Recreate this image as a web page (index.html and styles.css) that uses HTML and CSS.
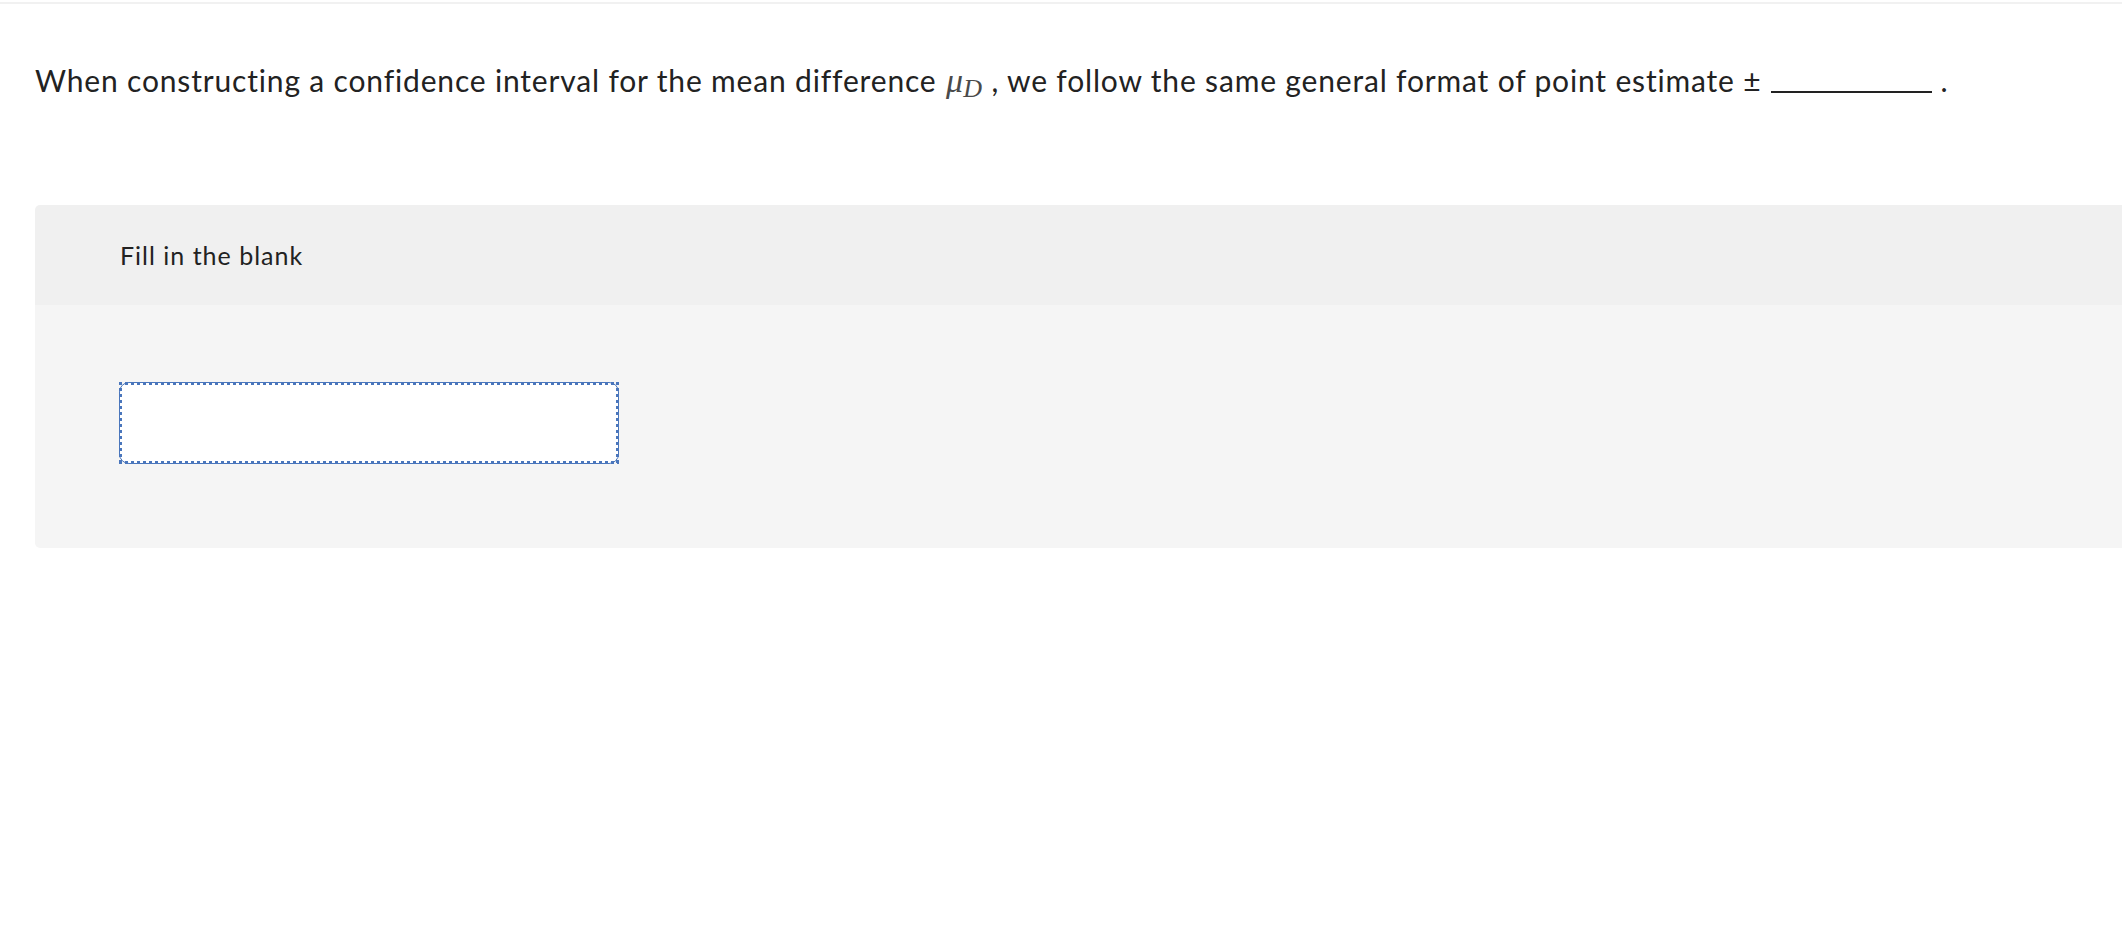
FILE: index.html
```html
<!DOCTYPE html>
<html lang="en">
<head>
    <meta charset="UTF-8">
    <meta name="viewport" content="width=device-width, initial-scale=1.0">
    <title>Fill in the blank</title>
    <link rel="stylesheet" href="styles.css">
</head>
<body>
    <div class="top-rule"></div>

    <div class="question">
        When constructing a confidence interval for the mean difference
        <span class="math"><span class="mu">μ</span><sub class="sub">D</sub></span> , we follow the same general format of point estimate ± <span class="blank"></span> .
    </div>

    <div class="card">
        <div class="card-header">Fill in the blank</div>
        <div class="card-body">
            <div class="focus-ring">
                <input type="text" class="answer" aria-label="Answer">
            </div>
        </div>
    </div>
</body>
</html>
```

FILE: styles.css
```css
* {
    margin: 0;
    padding: 0;
    box-sizing: border-box;
}

body {
    font-family: 'Lato', 'Open Sans', sans-serif;
    font-variant-ligatures: none;
    color: #222;
    background: #fff;
    overflow-x: hidden;
}

.top-rule {
    height: 2px;
    margin-top: 2px;
    background: #f1f1f1;
}

/* Question line */
.question {
    margin-top: 56px;
    padding-left: 35px;
    font-size: 30px;
    line-height: 40px;
    letter-spacing: 0.83px;
    white-space: nowrap;
}

.math {
    font-family: 'Liberation Serif', 'DejaVu Serif', serif;
    font-style: italic;
    color: #4a4a4a;
    letter-spacing: 0;
    margin-left: 1px;
}

.mu {
    font-size: 34px;
}

.sub {
    font-size: 26px;
    vertical-align: -5px;
    line-height: 0;
    margin-right: 1px;
}

.blank {
    display: inline-block;
    width: 161px;
    height: 2px;
    background: #222;
    vertical-align: -1px;
    margin-left: 1px;
}

/* Answer card */
.card {
    margin: 103px -40px 0 35px;
    border-radius: 5px;
    overflow: hidden;
}

.card-header {
    background: #f0f0f0;
    padding: 33px 85px;
    font-size: 25px;
    line-height: 34px;
    letter-spacing: 1px;
}

.card-body {
    background: #f5f5f5;
    padding: 77px 84px 84px;
}

.focus-ring {
    width: 500px;
    height: 82px;
    position: relative;
}

.answer {
    width: 100%;
    height: 100%;
    border: 1px solid #4a76bc;
    border-radius: 10px;
    background: #fff;
    outline: none;
    font: inherit;
    padding: 0 16px;
}

/* square dotted focus outline drawn over the rounded border */
.focus-ring::after {
    content: "";
    position: absolute;
    inset: 0;
    pointer-events: none;
    background:
        repeating-linear-gradient(90deg, #4a76bc 0 3px, transparent 3px 6px) top / 100% 3px no-repeat,
        repeating-linear-gradient(90deg, #4a76bc 0 3px, transparent 3px 6px) bottom / 100% 3px no-repeat,
        repeating-linear-gradient(180deg, #4a76bc 0 3px, transparent 3px 6px) left / 3px 100% no-repeat,
        repeating-linear-gradient(180deg, #4a76bc 0 3px, transparent 3px 6px) right / 3px 100% no-repeat;
}
```
